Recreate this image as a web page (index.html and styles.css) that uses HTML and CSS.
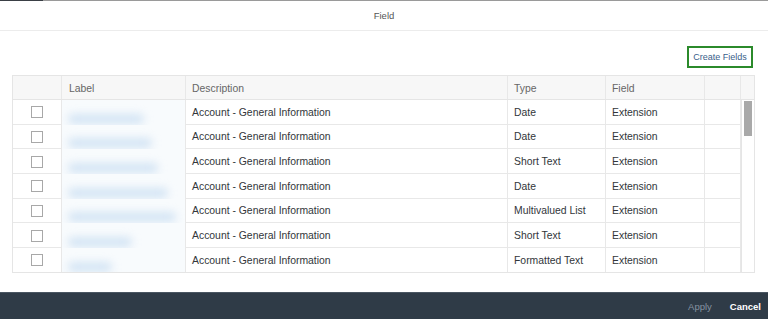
FILE: index.html
```html
<!DOCTYPE html>
<html>
<head>
<meta charset="utf-8">
<link rel="stylesheet" href="styles.css">
</head>
<body>
<div class="page">
  <div class="topline"></div>
  <div class="dlg-head">Field</div>
  <div class="toolbar"><button class="create">Create Fields</button></div>
  <div class="table">
    <div class="row head">
      <div class="c chk"></div>
      <div class="c lab">Label</div>
      <div class="c">Description</div>
      <div class="c">Type</div>
      <div class="c">Field</div>
      <div class="c"></div>
      <div class="c sb"></div>
    </div>
    <div class="body">
      <div class="rows">
        <div class="row"><div class="c chk"><span class="box"></span></div><div class="c lab"><span class="blur" style="width:76px"></span></div><div class="c">Account - General Information</div><div class="c">Date</div><div class="c">Extension</div><div class="c"></div></div>
        <div class="row"><div class="c chk"><span class="box"></span></div><div class="c lab"><span class="blur" style="width:84px"></span></div><div class="c">Account - General Information</div><div class="c">Date</div><div class="c">Extension</div><div class="c"></div></div>
        <div class="row"><div class="c chk"><span class="box"></span></div><div class="c lab"><span class="blur" style="width:90px"></span></div><div class="c">Account - General Information</div><div class="c">Short Text</div><div class="c">Extension</div><div class="c"></div></div>
        <div class="row"><div class="c chk"><span class="box"></span></div><div class="c lab"><span class="blur" style="width:100px"></span></div><div class="c">Account - General Information</div><div class="c">Date</div><div class="c">Extension</div><div class="c"></div></div>
        <div class="row"><div class="c chk"><span class="box"></span></div><div class="c lab"><span class="blur" style="width:108px"></span></div><div class="c">Account - General Information</div><div class="c">Multivalued List</div><div class="c">Extension</div><div class="c"></div></div>
        <div class="row"><div class="c chk"><span class="box"></span></div><div class="c lab"><span class="blur" style="width:64px"></span></div><div class="c">Account - General Information</div><div class="c">Short Text</div><div class="c">Extension</div><div class="c"></div></div>
        <div class="row"><div class="c chk"><span class="box"></span></div><div class="c lab"><span class="blur" style="width:44px"></span></div><div class="c">Account - General Information</div><div class="c">Formatted Text</div><div class="c">Extension</div><div class="c"></div></div>
      </div>
      <div class="scroll"><div class="thumb"></div></div>
    </div>
  </div>
  <div class="footer">
    <button class="fbtn apply">Apply</button>
    <button class="fbtn cancel">Cancel</button>
  </div>
</div>
</body>
</html>
```
FILE: styles.css
```css
html, body {
  margin: 0;
  padding: 0;
  background: #fff;
}
.page {
  width: 768px;
  height: 319px;
  display: flex;
  flex-direction: column;
  font-family: "Liberation Sans", Arial, sans-serif;
  color: #32363a;
  overflow: hidden;
}
.topline {
  height: 1px;
  background: linear-gradient(to right, #3a3f45 0, #3a3f45 43px, #9a9a9a 43px, #9a9a9a 100%);
}
.dlg-head {
  height: 29px;
  border-bottom: 1px solid #ececec;
  display: flex;
  align-items: center;
  justify-content: center;
  font-size: 9.5px;
  color: #555;
}
.toolbar {
  display: flex;
  justify-content: flex-end;
  padding: 15px 15px 0 0;
  height: 22px;
}
.create {
  width: 66px;
  height: 22px;
  box-sizing: border-box;
  border: 2px solid #2b8a2b;
  background: #fff;
  color: #3a6089;
  font-family: "Liberation Sans", Arial, sans-serif;
  font-size: 9px;
  padding: 0;
  margin: 0;
}
.table {
  margin: 7px 0 0 12px;
  width: 743px;
  border: 1px solid #e5e5e5;
  box-sizing: border-box;
  font-size: 10.4px;
}
.row {
  display: grid;
  grid-template-columns: 49px 124px 322px 98px 99px 36px;
  height: 24.67px;
  box-sizing: border-box;
}
.row.head {
  grid-template-columns: 49px 124px 322px 98px 99px 36px 13px;
  height: 24px;
  background: #f7f7f7;
  border-bottom: 1px solid #e5e5e5;
  color: #666;
}
.c {
  border-right: 1px solid #e8e8e8;
  border-bottom: 1px solid #e8e8e8;
  display: flex;
  align-items: center;
  padding-left: 6px;
  padding-top: 1px;
  white-space: nowrap;
  overflow: hidden;
  box-sizing: border-box;
}
.head .c {
  border-bottom: none;
}
.head .c.sb {
  border-right: none;
}
.c.chk {
  justify-content: center;
  padding-left: 0;
}
.c.lab {
  border-bottom: none;
  background: #f8fbfd;
}
.head .c.lab {
  padding-left: 7px;
  background: transparent;
}
.box {
  width: 10px;
  height: 10px;
  border: 1px solid #a8a8a8;
  background: #fff;
}
.blur {
  display: block;
  height: 10px;
  margin-top: 12px;
  background: #d3e4f4;
  filter: blur(4px);
  border-radius: 5px;
}
.body {
  display: flex;
  height: 172px;
  overflow: hidden;
}
.rows {
  width: 728px;
}
.scroll {
  width: 13px;
  border-left: 1px solid #e5e5e5;
  box-sizing: border-box;
  padding: 1px 0 0 2px;
}
.thumb {
  width: 8px;
  height: 35px;
  background: #a9a9a9;
}
.footer {
  margin-top: auto;
  height: 27px;
  background: #2f3b47;
  border-top: 1px solid #4a5662;
  box-sizing: border-box;
  display: flex;
  justify-content: flex-end;
  align-items: center;
  padding-right: 7px;
  gap: 18px;
}
.fbtn {
  background: none;
  border: none;
  padding: 0;
  font-family: "Liberation Sans", Arial, sans-serif;
  font-size: 9.5px;
}
.apply {
  color: #8593a1;
}
.cancel {
  color: #fff;
  font-weight: bold;
}
```
